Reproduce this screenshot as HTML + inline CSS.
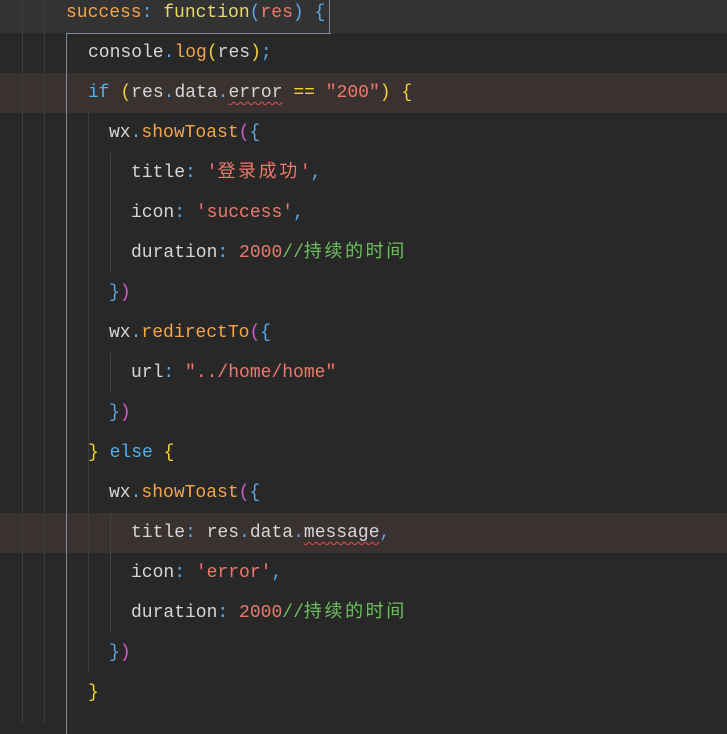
<!DOCTYPE html>
<html><head><meta charset="utf-8"><style>
body{margin:0;width:727px;height:724px;background:#282828;overflow:hidden;position:relative;font-family:"Liberation Mono","Noto Sans CJK SC",monospace;font-size:18px;color:#d6d6d6}
.l{position:absolute;left:0;height:40px;line-height:40px;white-space:pre}
.g{position:absolute;width:1px;background:#3c3c3c}
.k{color:#4fb3f0}.y{color:#f2d03a}.o{color:#f4a548}.s{color:#f0786a}.c{color:#6cc05c}.p{color:#d05ad0}.b{color:#5aa8e8}.d{color:#5aa8e8}.f{color:#e8d86a}
.z{letter-spacing:2.6px}
.sq{text-decoration:underline wavy #e05050;text-decoration-thickness:1px;text-underline-offset:4px}
</style></head><body>
<div style="position:absolute;left:0;top:0;width:727px;height:33px;background:#333333"></div>
<div style="position:absolute;left:0;top:73px;width:727px;height:40px;background:#3a3231"></div>
<div style="position:absolute;left:0;top:513px;width:727px;height:40px;background:#3a3231"></div>
<div class="g" style="left:22px;top:0;height:724px"></div>
<div class="g" style="left:44px;top:0;height:724px"></div>
<div style="position:absolute;left:66px;top:33px;width:264px;height:700px;border-left:1px solid #7a8a98;border-top:1px solid #7a8a98"></div>
<div style="position:absolute;left:329px;top:0;width:1px;height:33px;background:#7a8a98"></div>
<div class="g" style="left:88px;top:113px;height:560px"></div>
<div class="g" style="left:110px;top:153px;height:120px;background:#444"></div>
<div class="g" style="left:110px;top:353px;height:40px;background:#444"></div>
<div class="g" style="left:110px;top:513px;height:120px;background:#444"></div>

<div class="l" style="top:-7px;left:66px"><span class="o">success</span><span class="d">:</span> <span class="f">function</span><span class="b">(</span><span class="s">res</span><span class="b">)</span> <span class="b">{</span></div>
<div class="l" style="top:33px;left:88px">console<span class="d">.</span><span class="o">log</span><span class="y">(</span>res<span class="y">)</span><span class="d">;</span></div>
<div class="l" style="top:73px;left:88px"><span class="k">if</span> <span class="y">(</span>res<span class="d">.</span>data<span class="d">.</span><span class="sq">error</span> <span class="y">==</span> <span class="s">"200"</span><span class="y">)</span> <span class="y">{</span></div>
<div class="l" style="top:113px;left:109px">wx<span class="d">.</span><span class="o">showToast</span><span class="p">(</span><span class="b">{</span></div>
<div class="l" style="top:153px;left:131px">title<span class="d">:</span> <span class="s">'<span class="z">登录成功</span>'</span><span class="d">,</span></div>
<div class="l" style="top:193px;left:131px">icon<span class="d">:</span> <span class="s">'success'</span><span class="d">,</span></div>
<div class="l" style="top:233px;left:131px">duration<span class="d">:</span> <span class="s">2000</span><span class="c">//<span class="z">持续的时间</span></span></div>
<div class="l" style="top:273px;left:109px"><span class="b">}</span><span class="p">)</span></div>
<div class="l" style="top:313px;left:109px">wx<span class="d">.</span><span class="o">redirectTo</span><span class="p">(</span><span class="b">{</span></div>
<div class="l" style="top:353px;left:131px">url<span class="d">:</span> <span class="s">"../home/home"</span></div>
<div class="l" style="top:393px;left:109px"><span class="b">}</span><span class="p">)</span></div>
<div class="l" style="top:433px;left:88px"><span class="y">}</span> <span class="k">else</span> <span class="y">{</span></div>
<div class="l" style="top:473px;left:109px">wx<span class="d">.</span><span class="o">showToast</span><span class="p">(</span><span class="b">{</span></div>
<div class="l" style="top:513px;left:131px">title<span class="d">:</span> res<span class="d">.</span>data<span class="d">.</span><span class="sq">message</span><span class="d">,</span></div>
<div class="l" style="top:553px;left:131px">icon<span class="d">:</span> <span class="s">'error'</span><span class="d">,</span></div>
<div class="l" style="top:593px;left:131px">duration<span class="d">:</span> <span class="s">2000</span><span class="c">//<span class="z">持续的时间</span></span></div>
<div class="l" style="top:633px;left:109px"><span class="b">}</span><span class="p">)</span></div>
<div class="l" style="top:673px;left:88px"><span class="y">}</span></div>
</body></html>
